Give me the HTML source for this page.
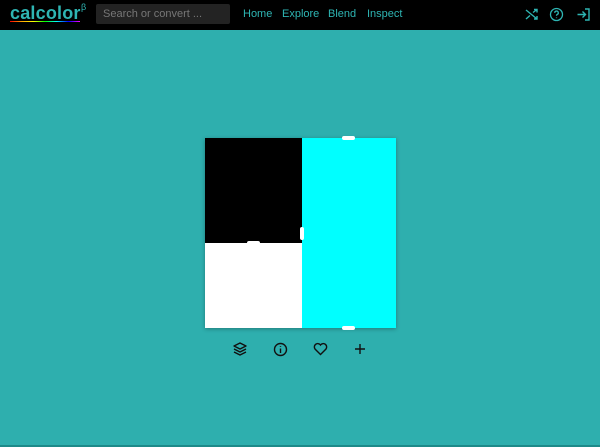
<!DOCTYPE html>
<html><head><style>
*{margin:0;padding:0;box-sizing:border-box}
body{width:600px;height:447px;background:#2eafae;font-family:"Liberation Sans",sans-serif;position:relative;overflow:hidden}
.nav{position:absolute;left:0;top:0;width:600px;height:31px;background:#000;border-bottom:1px solid #2eafae}
.logo{position:absolute;left:10px;top:3px;color:#2eb5b3;font-weight:bold;font-size:18px;letter-spacing:0.2px}
.beta{position:absolute;left:81px;top:2px;color:#2eb5b3;font-size:9px}
.rb{position:absolute;left:10px;top:21px;width:70px;height:1px;background:linear-gradient(90deg,red,orange,yellow,lime,cyan,blue,magenta)}
.search{position:absolute;left:96px;top:4px;width:134px;height:20px;background:#232323;border-radius:2px;color:#777;font-size:11px;padding:4px 7px}
.link{position:absolute;top:8px;color:#2eb5b3;font-size:11px}
.ic{position:absolute;top:7px}
.c{position:absolute}
</style></head><body>
<div class="nav">
<div class="logo">calcolor</div><div class="beta">β</div><div class="rb"></div>
<div class="search">Search or convert ...</div>
<div class="link" style="left:243px">Home</div>
<div class="link" style="left:282px">Explore</div>
<div class="link" style="left:328px">Blend</div>
<div class="link" style="left:367px">Inspect</div>
<svg class="ic" style="left:524px" width="15" height="15" viewBox="0 0 15 15" fill="none" stroke="#2eb5b3" stroke-width="1.4"><path d="M2 3l11 9M2 12l4-3.5M9 5.5l4-3M10 2.5h3v3M10 12h3v-3"/></svg>
<svg class="ic" style="left:549px" width="15" height="15" viewBox="0 0 15 15" fill="none" stroke="#2eb5b3" stroke-width="1.3"><circle cx="7.5" cy="7.5" r="6"/><path d="M5.7 5.8a1.8 1.8 0 1 1 2.5 1.7c-.6.3-.7.7-.7 1.3M7.5 10.5v.6"/></svg>
<svg class="ic" style="left:576px" width="15" height="15" viewBox="0 0 15 15" fill="none" stroke="#2eb5b3" stroke-width="1.4"><path d="M9 2h4v11H9M1.5 7.5h8M6.5 4.5l3 3-3 3"/></svg>
</div>
<div class="c" style="left:205px;top:138px;width:191px;height:190px;background:#fff;box-shadow:0 1px 4px rgba(0,0,0,.3)"></div>
<div class="c" style="left:205px;top:138px;width:97px;height:105px;background:#000"></div>
<div class="c" style="left:302px;top:138px;width:94px;height:190px;background:#0ff"></div>
<div class="c" style="left:342px;top:136px;width:13px;height:4px;background:#fff;border-radius:2px"></div>
<div class="c" style="left:247px;top:241px;width:13px;height:4px;background:#fff;border-radius:2px"></div>
<div class="c" style="left:300px;top:227px;width:4px;height:13px;background:#fff;border-radius:2px"></div>
<div class="c" style="left:342px;top:326px;width:13px;height:4px;background:#fff;border-radius:2px"></div>
<svg class="c" style="left:232px;top:341px" width="16" height="16" viewBox="0 0 16 16" fill="none" stroke="#111" stroke-width="1.4" stroke-linejoin="round"><path d="M8 2l6 3-6 3-6-3zM2 8l6 3 6-3M2 11l6 3 6-3"/></svg>
<svg class="c" style="left:273px;top:342px" width="15" height="15" viewBox="0 0 15 15" fill="none" stroke="#111" stroke-width="1.4"><circle cx="7.5" cy="7.5" r="6"/><path d="M7.5 6.5v4.5M7.5 4v.8"/></svg>
<svg class="c" style="left:313px;top:342px" width="15" height="14" viewBox="0 0 15 14" fill="none" stroke="#111" stroke-width="1.4"><path d="M7.5 12.5L2 7a3 3 0 0 1 5.5-4 3 3 0 0 1 5.5 4z"/></svg>
<svg class="c" style="left:354px;top:343px" width="12" height="12" viewBox="0 0 12 12" stroke="#111" stroke-width="1.4"><path d="M6 1v10M1 6h10"/></svg>
<div class="c" style="left:0;top:445px;width:600px;height:2px;background:#1d8a89"></div>
</body></html>
